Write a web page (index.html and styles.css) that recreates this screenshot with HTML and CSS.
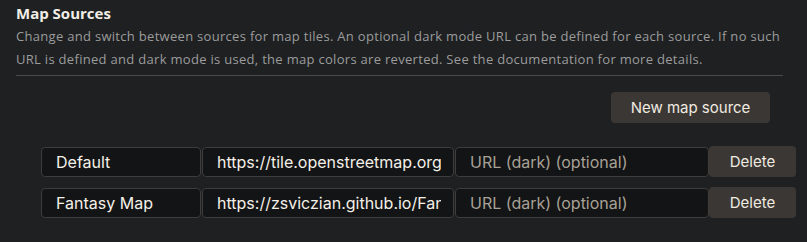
FILE: index.html
```html
<!DOCTYPE html>
<html>
<head>
<meta charset="utf-8">
<link rel="stylesheet" href="styles.css">
</head>
<body>
<div class="page">
  <div class="setting">
    <div class="title">Map Sources</div>
    <div class="desc">Change and switch between sources for map tiles. An optional dark mode URL can be defined for each source. If no such URL is defined and dark mode is used, the map colors are reverted. See the documentation for more details.</div>
  </div>
  <div class="actions">
    <button class="btn new">New map source</button>
  </div>
  <div class="rows">
    <div class="row">
      <input class="inp name" value="Default">
      <input class="inp url" value="https://tile.openstreetmap.org/{z}/{x}/{y}.png">
      <input class="inp dark" placeholder="URL (dark) (optional)">
      <button class="btn del">Delete</button>
    </div>
    <div class="row">
      <input class="inp name" value="Fantasy Map">
      <input class="inp url" value="https://zsviczian.github.io/FantasyMap/{z}/{x}/{y}.png">
      <input class="inp dark" placeholder="URL (dark) (optional)">
      <button class="btn del">Delete</button>
    </div>
  </div>
</div>
</body>
</html>
```
FILE: styles.css
```css
html, body {
  margin: 0;
  padding: 0;
  background: #1e2022;
}
.page {
  padding: 3px 0 0 16px;
  font-family: "Open Sans", "Noto Sans", sans-serif;
}
.setting {
  width: 767px;
  border-bottom: 1px solid #4a4a4a;
  padding-bottom: 4px;
}
.title {
  color: #f2eee6;
  font-size: 15px;
  font-weight: 700;
  line-height: 20px;
}
.desc {
  color: #9c9c9c;
  font-size: 13px;
  letter-spacing: 0.3px;
  line-height: 23px;
  margin-top: 2px;
}
.actions {
  display: flex;
  justify-content: flex-end;
  width: 754px;
  padding-top: 16px;
}
.btn {
  font-family: Inter, sans-serif;
  background: #3b3734;
  color: #f0ebe0;
  border: none;
  border-radius: 4px;
  font-size: 15px;
  cursor: pointer;
  padding: 0;
}
.new {
  width: 159px;
  height: 31px;
}
.rows {
  display: flex;
  flex-direction: column;
  gap: 10px;
  padding: 23px 0 0 25px;
}
.row {
  display: flex;
  align-items: center;
  gap: 1px;
}
.inp {
  flex: none;
  font-family: Inter, sans-serif;
  font-size: 16px;
  color: #f4f0e8;
  background: #131415;
  border: 1px solid #3f3d3b;
  border-radius: 4px;
  height: 30px;
  box-sizing: border-box;
  padding: 0 12px 0 14px;
  outline: none;
}
.inp::placeholder {
  color: #a8a195;
}
.name { width: 160px; }
.url { width: 252px; }
.dark { width: 254px; }
.del {
  flex: none;
  width: 87px;
  height: 31px;
  margin-left: -1px;
}
```
